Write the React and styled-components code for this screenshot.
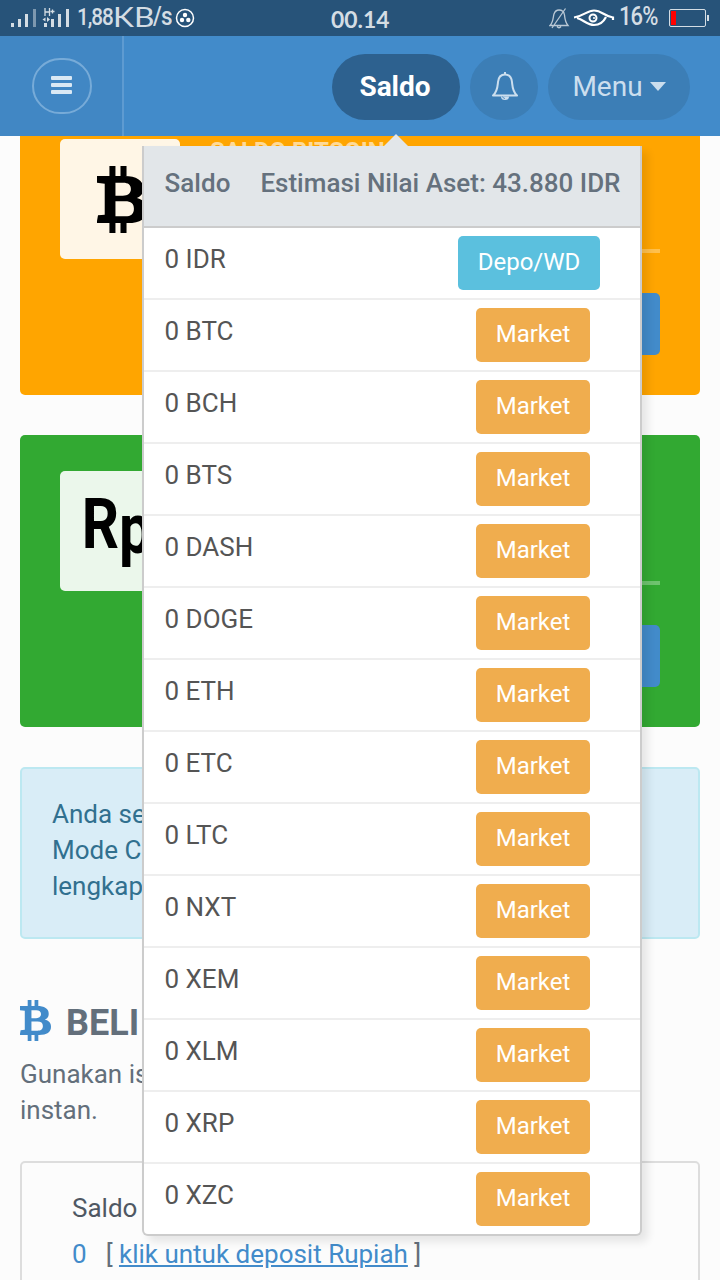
import React from 'react';
import styled, { createGlobalStyle } from 'styled-components';

const GlobalStyle = createGlobalStyle`
  * {
    box-sizing: border-box;
  }

  body {
    margin: 0;
    background: #fcfcfc;
    font-family: Roboto, "Liberation Sans", sans-serif;
    font-size: 26px;
    line-height: 36px;
    color: #636f7b;
  }
`;

const Screen = styled.div`
  width: 720px;
  height: 1280px;
  overflow: hidden;
`;

/* ---- phone status bar ---- */

const StatusBar = styled.div`
  position: relative;
  z-index: 3;
  display: flex;
  justify-content: space-between;
  height: 36px;
  padding: 0 11px;
  background: #275379;
  color: #d4dde4;

  svg {
    display: block;
    flex: none;
  }
`;

const StatusGroup = styled.div`
  display: flex;
  width: ${(props) => props.$width}px;
`;

const StatusText = styled.span`
  flex: none;
  width: ${(props) => props.$width}px;
  font-family: ${(props) => (props.$round ? 'Lato, ' : '')}Roboto, sans-serif;
  font-size: ${(props) => props.$size || 22}px;
  font-weight: ${(props) => props.$weight || 500};
  line-height: ${(props) => props.$line || 36}px;
  letter-spacing: ${(props) => props.$spacing || 0}px;
  white-space: nowrap;
  transform: scaleX(${(props) => props.$stretch || 1});
  transform-origin: left;
`;

/* ---- site header ---- */

const Header = styled.header`
  position: relative;
  z-index: 2;
  display: flex;
  height: 100px;
  background: #428bca;
`;

const MenuToggle = styled.div`
  display: flex;
  align-items: center;
  width: 124px;
  padding-left: 32px;
  background: #4187c4;
  border-right: 2px solid #5e9bd1;
`;

const RoundButton = styled.button`
  display: flex;
  flex-direction: column;
  align-items: center;
  justify-content: center;
  gap: 3px;
  width: 60px;
  height: 56px;
  padding: 0 1px 2px 0;
  background: none;
  border: 2px solid #77abd8;
  border-radius: 30px;
`;

const Bar = styled.span`
  width: 21px;
  height: 4px;
  border-radius: 1px;
  background: #d9e8f4;
`;

const Nav = styled.nav`
  display: flex;
  flex: 1;
  justify-content: flex-end;
  gap: 10px;
  padding: 18px 30px 0 0;
`;

const NavButton = styled.button`
  display: flex;
  align-items: center;
  justify-content: center;
  gap: 7px;
  width: ${(props) => props.$width}px;
  height: 66px;
  padding: 0 ${(props) => (props.$active ? 2 : 0)}px 2px 0;
  border: 0;
  border-radius: 33px;
  background: ${(props) => (props.$active ? '#2d618f' : '#3c7eb6')};
  color: ${(props) => (props.$active ? '#fff' : '#cbdeee')};
  font-family: inherit;
  font-size: 28px;
  font-weight: ${(props) => (props.$active ? 700 : 400)};
`;

const Caret = styled.span`
  border: 8px solid transparent;
  border-top: 9px solid #cbdeee;
  border-bottom: 0;
`;

/* ---- balance dropdown ---- */

const Dropdown = styled.div`
  position: absolute;
  top: 110px;
  right: 78px;
  width: 500px;
  background: #fff;
  border: 2px solid #ccc;
  border-top: 0;
  border-radius: 0 0 6px 6px;
  box-shadow: 6px 6px 8px rgba(0, 0, 0, 0.09);

  &::before {
    content: '';
    position: absolute;
    top: -12px;
    left: 240px;
    border: 12px solid transparent;
    border-top: 0;
    border-bottom-color: #e2e6e9;
  }
`;

const DropdownHeader = styled.div`
  display: flex;
  gap: 30px;
  height: 82px;
  padding: 19px 0 0 20.6px;
  background: #e2e6e9;
  border-bottom: 2px solid #ccc;
  color: #65717d;
  font-weight: 500;
  white-space: nowrap;
`;

const BalanceRow = styled.div`
  display: flex;
  justify-content: space-between;
  height: 72px;
  padding: 8px 0 0 20.5px;
  border-bottom: 2px solid #eee;
  color: #555;

  &:last-child {
    height: 70px;
    border-bottom: 0;
  }
`;

const Balance = styled.span`
  padding-top: 5px;
`;

const ActionButton = styled.button`
  height: 54px;
  width: ${(props) => (props.$info ? 142 : 114)}px;
  margin-right: ${(props) => (props.$info ? 40 : 50)}px;
  padding: 0 0 2px;
  border: 0;
  border-radius: 5px;
  background: ${(props) => (props.$info ? '#5bc0de' : '#f0ad4e')};
  color: #fff;
  font-family: inherit;
  font-size: 24px;
`;

/* ---- page content ---- */

const Content = styled.main`
  display: flex;
  flex-direction: column;
  margin-top: -33px;
  padding: 0 20px;
`;

const Card = styled.section`
  display: flex;
  gap: 30px;
  height: 292px;
  margin-bottom: 40px;
  padding: 36px 40px 0;
  border-radius: 5px;
  background: ${(props) => props.$color};
`;

const CardIcon = styled.div`
  display: flex;
  align-items: center;
  justify-content: center;
  width: 120px;
  height: 120px;
  padding-left: 3px;
  overflow: hidden;
  border-radius: 5px;
  background: rgba(255, 255, 255, 0.9);
  color: #000;
`;

const Rupiah = styled.span`
  display: flex;
  padding: 0 12px 15px 0;
  font-size: 71px;
  font-weight: 700;
  line-height: 105px;
  transform: scaleX(0.82);

  /* the p hangs a little below the R */
  span {
    margin: 5px 0 -5px;
  }
`;

const CardBody = styled.div`
  display: flex;
  flex: 1;
  flex-direction: column;
`;

const CardTitle = styled.h2`
  height: 114px;
  margin: 0;
  border-bottom: 4px solid rgba(255, 255, 255, 0.3);
  color: rgba(255, 255, 255, 0.6);
  font-size: 24px;
  line-height: 24px;
`;

const CardButton = styled.button`
  width: 100%;
  height: 62px;
  margin-top: 40px;
  border: 0;
  border-radius: 5px;
  background: #428bca;
`;

const Notice = styled.div`
  height: 172px;
  padding: 27px 30px;
  border: 2px solid #bce8f1;
  border-radius: 5px;
  background: #d9edf7;
  color: #31708f;
`;

const Line = styled.div`
  white-space: nowrap;
`;

const SectionTitle = styled.h1`
  display: flex;
  align-items: center;
  gap: 15px;
  height: 42px;
  margin: 60px 0 15px;
  color: #636f7b;
  font-size: 36px;

  svg {
    color: #428bca;
  }

  span {
    padding-top: 6px;
  }
`;

const Panel = styled.section`
  height: 200px;
  margin-top: 33px;
  padding: 27px 50px;
  border: 2px solid #ddd;
  border-radius: 5px;
`;

const PanelLabel = styled.div`
  margin-bottom: 10px;
  color: #4f5863;
`;

const PanelValue = styled.div`
  display: flex;
  gap: 19px;

  a {
    color: #428bca;
    text-decoration: underline;
  }
`;

const Amount = styled.span`
  color: #428bca;
`;

const BitcoinIcon = ({ width, height }) => (
  <svg width={width} height={height} viewBox="290 108 149 201" preserveAspectRatio="none" fill="currentColor">
    <path d="M327 108h18v31h-18zM360 108h18v31h-18zM327 277h18v32h-18zM360 277h18v32h-18z" />
    <path
      fillRule="evenodd"
      d="M290 138H372C407 138 428 151 428 175C428 190 421 200 409 204C428 209 439 221 439 239C439 266 419 279 382 279H289L293 256L313 254V161L290 158ZM345 158V197H367C382 197 391 190 391 177C391 164 383 158 368 158ZM345 214V259H374C392 259 400 251 400 236C400 221 391 214 374 214Z"
    />
  </svg>
);

const SignalIcon = () => (
  <svg width="66" height="36" viewBox="11 0 66 36" fill="#d4dde4">
    <path d="M11 23h3v4h-3zM18 19h3v8h-3zM25 14h3v13h-3z" />
    <path d="M33 9h3v18h-3z" fill="#7d98af" />
    <path d="M44 23h3v4h-3zM51 19h3v8h-3zM58 14h3v13h-3zM66 9h3v18h-3z" />
    <path d="M45 8v8M49.500 8v8M45 12h5M50.500 11.500h4M52.500 9.500v4" stroke="#d4dde4" strokeWidth="1.300" />
    <path d="M42.500 19.500l3-2v4zM50 19.500l-3-2.500v5z" />
  </svg>
);

const DotsIcon = () => (
  <svg width="20" height="36" viewBox="175 0 20 36">
    <circle cx="185" cy="18" r="8.500" fill="none" stroke="#fff" strokeWidth="1.500" />
    <g fill="#fff">
      <circle cx="185" cy="15" r="2.200" />
      <circle cx="182" cy="20" r="2.200" />
      <circle cx="188.300" cy="20" r="2.200" />
    </g>
  </svg>
);

const SilentIcon = () => (
  <svg width="70" height="36" viewBox="549 0 70 36" fill="none">
    <g stroke="#b9c8d5" strokeWidth="1.300">
      <path d="M550 25.500C553.500 22 553 17 554 14C555 11 557 10 559 10C562 10 564 12 564.500 15C565 19 565 22 568 25.500ZM557 26.500q2 2.500 4 0M552 28L565.500 8.500" />
    </g>
    <g stroke="#fff">
      <path d="M574 17.500C584 16 587 10.500 594 10.500C602 10.500 604 16 613 17.500V20M577 18C584 20 587 25 594 25C600 25 604 21 606 17" strokeWidth="2.200" />
      <circle cx="593" cy="18" r="3.500" strokeWidth="2" />
    </g>
    <circle cx="594" cy="18" r="1" fill="#fff" />
  </svg>
);

const BatteryIcon = () => (
  <svg width="41" height="36" viewBox="669 0 41 36">
    <rect x="669.500" y="9.500" width="36" height="17" rx="1.500" fill="none" stroke="#d4dde4" />
    <rect x="671" y="11" width="5" height="14" fill="#f00" />
    <path d="M707 15h2v6h-2z" fill="#d4dde4" />
  </svg>
);

const BellIcon = () => (
  <svg width="28" height="30" viewBox="491 71 28 30" fill="none" stroke="#cbdeee" strokeWidth="2">
    <path
      strokeLinejoin="round"
      d="M493 95.500C497.500 91.500 497.500 87 498 82C498.500 77 501 74.500 505 74.500C509 74.500 511.500 77 512 82C512.500 87 512.500 91.500 517 95.500Z"
      transform="translate(1 0)"
    />
    <path d="M506 72v3" />
    <path d="M502 96.500a4 3.500 0 0 0 8 0z" fill="#cbdeee" stroke="none" />
    <path d="M503.500 96.500q.5 2 2.500 2" stroke="#3c7eb6" strokeWidth=".8" />
  </svg>
);

const coins = ['BTC', 'BCH', 'BTS', 'DASH', 'DOGE', 'ETH', 'ETC', 'LTC', 'NXT', 'XEM', 'XLM', 'XRP', 'XZC'];

const App = () => {
  return (
    <Screen>
      <GlobalStyle />
      <StatusBar>
        <StatusGroup $width={320}>
          <SignalIcon />
          <StatusText $width={36} $size={23} $spacing={-1.2} $stretch={0.9}>1,88</StatusText>
          <StatusText $width={40} $round $size={27} $line={33} $weight={400} $stretch={1.17}>KB</StatusText>
          <StatusText $width={22} $size={25} $line={33} $spacing={-1} $stretch={0.9}>/s</StatusText>
          <DotsIcon />
        </StatusGroup>
        <StatusGroup $width={218}>
          <StatusText $width={60} $line={39} $round $weight={700} $stretch={1.04}>00.14</StatusText>
        </StatusGroup>
        <StatusGroup $width={160}>
          <SilentIcon />
          <StatusText $width={50} $size={25} $line={33} $spacing={-1} $stretch={0.88}>16%</StatusText>
          <BatteryIcon />
        </StatusGroup>
      </StatusBar>

      <Header>
        <MenuToggle>
          <RoundButton>
            <Bar />
            <Bar />
            <Bar />
          </RoundButton>
        </MenuToggle>
        <Nav>
          <NavButton $width={128} $active>Saldo</NavButton>
          <NavButton $width={68}>
            <BellIcon />
          </NavButton>
          <NavButton $width={142}>
            Menu <Caret />
          </NavButton>
        </Nav>

        <Dropdown>
          <DropdownHeader>
            <span>Saldo</span>
            <span>Estimasi Nilai Aset: 43.880 IDR</span>
          </DropdownHeader>
          <BalanceRow>
            <Balance>0 IDR</Balance>
            <ActionButton $info>Depo/WD</ActionButton>
          </BalanceRow>
          {coins.map((coin) => (
            <BalanceRow key={coin}>
              <Balance>0 {coin}</Balance>
              <ActionButton>Market</ActionButton>
            </BalanceRow>
          ))}
        </Dropdown>
      </Header>

      <Content>
        <Card $color="#ffa500">
          <CardIcon>
            <BitcoinIcon width={50} height={67} />
          </CardIcon>
          <CardBody>
            <CardTitle>SALDO BITCOIN</CardTitle>
            <CardButton />
          </CardBody>
        </Card>
        <Card $color="#32a932">
          <CardIcon>
            <Rupiah>
              R<span>p</span>
            </Rupiah>
          </CardIcon>
          <CardBody>
            <CardTitle />
            <CardButton />
          </CardBody>
        </Card>

        <Notice>
          <Line>Anda se</Line>
          <Line>Mode C</Line>
          <Line>lengkap</Line>
        </Notice>

        <SectionTitle>
          <BitcoinIcon width={31} height={41} />
          <span>BELI</span>
        </SectionTitle>
        <Line>Gunakan is</Line>
        <Line>instan.</Line>

        <Panel>
          <PanelLabel>Saldo</PanelLabel>
          <PanelValue>
            <Amount>0</Amount>
            <span>
              [ <a href="#deposit">klik untuk deposit Rupiah</a> ]
            </span>
          </PanelValue>
        </Panel>
      </Content>
    </Screen>
  );
};

export default App;
